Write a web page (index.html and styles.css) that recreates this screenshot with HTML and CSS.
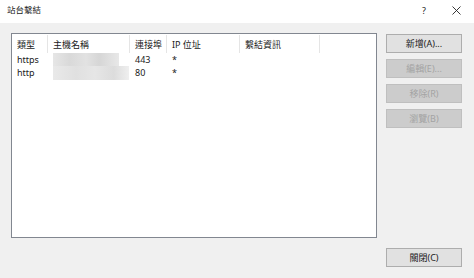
FILE: index.html
```html
<!DOCTYPE html>
<html lang="zh-Hant">
<head>
<meta charset="utf-8">
<title>站台繫結</title>
<link rel="stylesheet" href="styles.css">
</head>
<body>
<div class="window">
  <div class="titlebar">
    <span class="title">站台繫結</span>
    <span class="tb-help">?</span>
    <span class="tb-close"><svg width="9" height="9" viewBox="0 0 9 9"><path d="M0.5 0.5 L8.5 8.5 M8.5 0.5 L0.5 8.5" stroke="#222" stroke-width="0.9" fill="none"/></svg></span>
  </div>
  <div class="content">
    <div class="main">
      <div class="list">
        <div class="row header">
          <div class="c c1">類型</div>
          <div class="c c2">主機名稱</div>
          <div class="c c3">連接埠</div>
          <div class="c c4">IP 位址</div>
          <div class="c c5">繫結資訊</div>
        </div>
        <div class="row item">
          <div class="c c1">https</div>
          <div class="c c2"><span class="blur b1"></span></div>
          <div class="c c3">443</div>
          <div class="c c4">*</div>
          <div class="c c5"></div>
        </div>
        <div class="row item">
          <div class="c c1">http</div>
          <div class="c c2"><span class="blur b2"></span></div>
          <div class="c c3">80</div>
          <div class="c c4">*</div>
          <div class="c c5"></div>
        </div>
      </div>
      <div class="side">
        <div class="btn">新增(A)...</div>
        <div class="btn disabled">編輯(E)...</div>
        <div class="btn disabled">移除(R)</div>
        <div class="btn disabled">瀏覽(B)</div>
      </div>
    </div>
    <div class="footer">
      <div class="btn">關閉(C)</div>
    </div>
  </div>
</div>
</body>
</html>
```
FILE: styles.css
```css
html, body {
  margin: 0;
  padding: 0;
}
body {
  width: 474px;
  height: 278px;
  overflow: hidden;
  font-family: "Noto Sans", "Noto Sans CJK TC", sans-serif;
  font-size: 9px;
  color: #1a1a1a;
  background: #f0f0f0;
}
.window {
  width: 474px;
  height: 278px;
  display: flex;
  flex-direction: column;
}
.titlebar {
  height: 23px;
  background: #ffffff;
  display: flex;
  align-items: center;
  padding-left: 7px;
  box-sizing: border-box;
}
.title {
  flex: 1;
  font-size: 8.5px;
  color: #222;
  line-height: 1;
  margin-top: -2px;
}
.tb-help {
  width: 10px;
  text-align: center;
  font-size: 9px;
  color: #222;
  margin-right: 23px;
  margin-top: -2px;
}
.tb-close {
  width: 9px;
  height: 9px;
  margin-right: 13px;
  margin-top: -2px;
  display: flex;
}
.content {
  flex: 1;
  background: #f0f0f0;
  padding: 10px 12px 11px 11px;
  display: flex;
  flex-direction: column;
  box-sizing: border-box;
}
.main {
  display: flex;
  gap: 9px;
}
.list {
  width: 366px;
  height: 205px;
  box-sizing: border-box;
  border: 1px solid #828790;
  background: #ffffff;
  padding-top: 1px;
}
.row {
  display: flex;
  height: 13px;
  align-items: center;
}
.row.header {
  height: 18px;
}
.c {
  box-sizing: border-box;
  padding-left: 5px;
  white-space: nowrap;
  height: 100%;
  display: flex;
  align-items: center;
  position: relative;
}
.header .c {
  border-right: 1px solid #e5e5e5;
}
.header .c5 {
  border-right: 1px solid #e5e5e5;
}
.c1 { width: 36px; }
.c2 { width: 82px; }
.c3 { width: 37px; }
.c4 { width: 73px; }
.c5 { width: 80px; }
.item .c2 { padding-left: 5px; }
.blur {
  display: block;
  height: 13px;
  background: linear-gradient(90deg, #e6e6e6 0%, #d9d9d9 25%, #e2e2e2 50%, #d6d6d6 70%, #e8e8e8 100%);
}
.b1 { width: 66px; }
.b2 { width: 76px; height: 14px; background: linear-gradient(90deg, #e9e9e9 0%, #e0e0e0 30%, #e6e6e6 55%, #dcdcdc 80%, #efefef 100%); }
.side {
  width: 76px;
  display: flex;
  flex-direction: column;
  gap: 6px;
  padding-top: 1px;
}
.btn {
  height: 19px;
  box-sizing: border-box;
  border: 1px solid #adadad;
  background: #e1e1e1;
  display: flex;
  align-items: center;
  justify-content: center;
  font-size: 9px;
  color: #1a1a1a;
}
.btn.disabled {
  background: #cccccc;
  border-color: #bfbfbf;
  color: #a3a3a3;
}
.footer {
  margin-top: 10px;
  display: flex;
  justify-content: flex-end;
}
.footer .btn {
  width: 76px;
}
```
